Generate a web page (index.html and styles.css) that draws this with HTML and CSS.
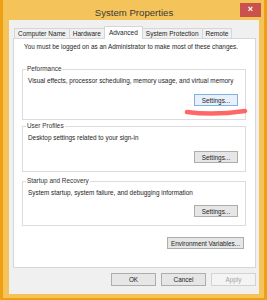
FILE: index.html
```html
<!DOCTYPE html>
<html>
<head>
<meta charset="utf-8">
<link rel="stylesheet" href="styles.css">
</head>
<body>
<div class="win">
  <div class="titlebar">
    <span></span>
    <span class="title">System Properties</span>
    <span class="close">×</span>
  </div>
  <div class="client">
    <div class="tabs">
      <span class="tab">Computer Name</span>
      <span class="tab">Hardware</span>
      <span class="tab tab--active">Advanced</span>
      <span class="tab">System Protection</span>
      <span class="tab">Remote</span>
    </div>
    <div class="panel">
      <p class="intro">You must be logged on as an Administrator to make most of these changes.</p>
      <fieldset class="group group--perf">
        <legend>Peformance</legend>
        <p class="desc">Visual effects, processor scheduling, memory usage, and virtual memory</p>
        <div class="group-actions">
          <span class="btn btn--focus">Settings...</span>
          <svg class="scribble" width="64" height="10" viewBox="0 0 64 10"><path d="M3 5 C 18 7, 40 7, 61 4" stroke="#ff6767" stroke-width="4.5" fill="none" stroke-linecap="round"/></svg>
        </div>
      </fieldset>
      <fieldset class="group group--user">
        <legend>User Profiles</legend>
        <p class="desc">Desktop settings related to your sign-in</p>
        <div class="group-actions"><span class="btn">Settings...</span></div>
      </fieldset>
      <fieldset class="group group--startup">
        <legend>Startup and Recovery</legend>
        <p class="desc">System startup, system failure, and debugging information</p>
        <div class="group-actions"><span class="btn">Settings...</span></div>
      </fieldset>
      <div class="env-row"><span class="btn btn--env">Environment Variables...</span></div>
    </div>
    <div class="actions">
      <span class="btn btn--dlg">OK</span>
      <span class="btn btn--dlg">Cancel</span>
      <span class="btn btn--dlg btn--disabled">Apply</span>
    </div>
  </div>
</div>
</body>
</html>
```
FILE: styles.css
```css
* { box-sizing: border-box; }
html, body { margin: 0; padding: 0; }
body {
  width: 267px;
  height: 300px;
  overflow: hidden;
  background: #ee9f12;
  font-family: "Liberation Sans", Arial, sans-serif;
  font-size: 6.4px;
  color: #1e1e1e;
}
.win {
  margin-left: 3px;
  width: 261px;
  height: 298px;
  background: #f4c45b;
  padding: 0 5px 4px 6px;
  display: flex;
  flex-direction: column;
}
.titlebar {
  height: 20px;
  display: grid;
  grid-template-columns: 1fr auto 1fr;
  align-items: start;
}
.title {
  font-size: 9.6px;
  color: #3a3a3a;
  padding-top: 7px;
}
.close {
  justify-self: end;
  margin-top: 3px;
  margin-right: -2px;
  width: 21px;
  height: 14px;
  background: #c9524c;
  color: #fff;
  font-size: 9px;
  line-height: 13px;
  text-align: center;
  font-weight: bold;
}
.client {
  flex: 1;
  background: #f0f0f0;
  display: flex;
  flex-direction: column;
}
.tabs {
  display: flex;
  align-items: flex-end;
  padding-left: 5px;
  margin-top: 7px;
  height: 12px;
  position: relative;
  z-index: 1;
  margin-bottom: -1px;
}
.tab {
  height: 10px;
  line-height: 9px;
  padding: 0 3px;
  border: 1px solid #d6d6d6;
  border-bottom: none;
  background: #f0f0f0;
  margin-right: -1px;
  margin-bottom: 1px;
  white-space: nowrap;
  font-size: 6.5px;
}
.tab--active {
  height: 13px;
  background: #fff;
  margin-bottom: 0;
  padding: 0 4px;
  line-height: 11px;
  position: relative;
}
.panel {
  margin-left: 4px;
  width: 243px;
  height: 230px;
  background: #fff;
  border: 1px solid #d6d6d6;
  padding: 3px 0 0 8px;
}
.intro {
  margin: 0 0 0 2px;
  height: 12px;
  line-height: 10px;
  white-space: nowrap;
}
fieldset.group {
  margin: 0;
  width: 224px;
  border: 1px solid #dcdcdc;
  padding: 0 7px 0 5px;
  display: flex;
  flex-direction: column;
}
.group legend {
  padding: 0 1px;
  margin-left: -2px;
  line-height: 8px;
  color: #333;
}
fieldset.group--perf { height: 55px; margin-top: 11px; }
fieldset.group--user { height: 50px; margin-top: 2px; }
fieldset.group--startup { height: 49px; margin-top: 5px; }
.desc {
  margin: 4px 0 0 0;
  line-height: 8px;
  white-space: nowrap;
}
.group-actions {
  margin-top: auto;
  display: flex;
  justify-content: flex-end;
  position: relative;
  margin-bottom: 8px;
}
.group--perf .group-actions { margin-bottom: 13px; }
.btn {
  display: inline-flex;
  align-items: center;
  justify-content: center;
  height: 12px;
  border: 1px solid #adadad;
  background: #e6e6e6;
  color: #1e1e1e;
  font-size: 6.4px;
  width: 44px;
  white-space: nowrap;
}
.btn--focus {
  border-color: #7fb3e8;
  background: #e8f1fb;
}
.scribble {
  position: absolute;
  right: -10px;
  top: 13px;
}
.env-row {
  display: flex;
  justify-content: flex-end;
  margin-top: 11px;
  padding-right: 11px;
}
.btn--env { width: 77px; }
.actions {
  display: flex;
  justify-content: flex-end;
  gap: 5px;
  margin-top: 5px;
  padding-right: 3px;
}
.btn--dlg { width: 45px; height: 13px; }
.btn--disabled {
  color: #a3a3a3;
  border-color: #d3d3d3;
  background: #f4f4f4;
}
```
